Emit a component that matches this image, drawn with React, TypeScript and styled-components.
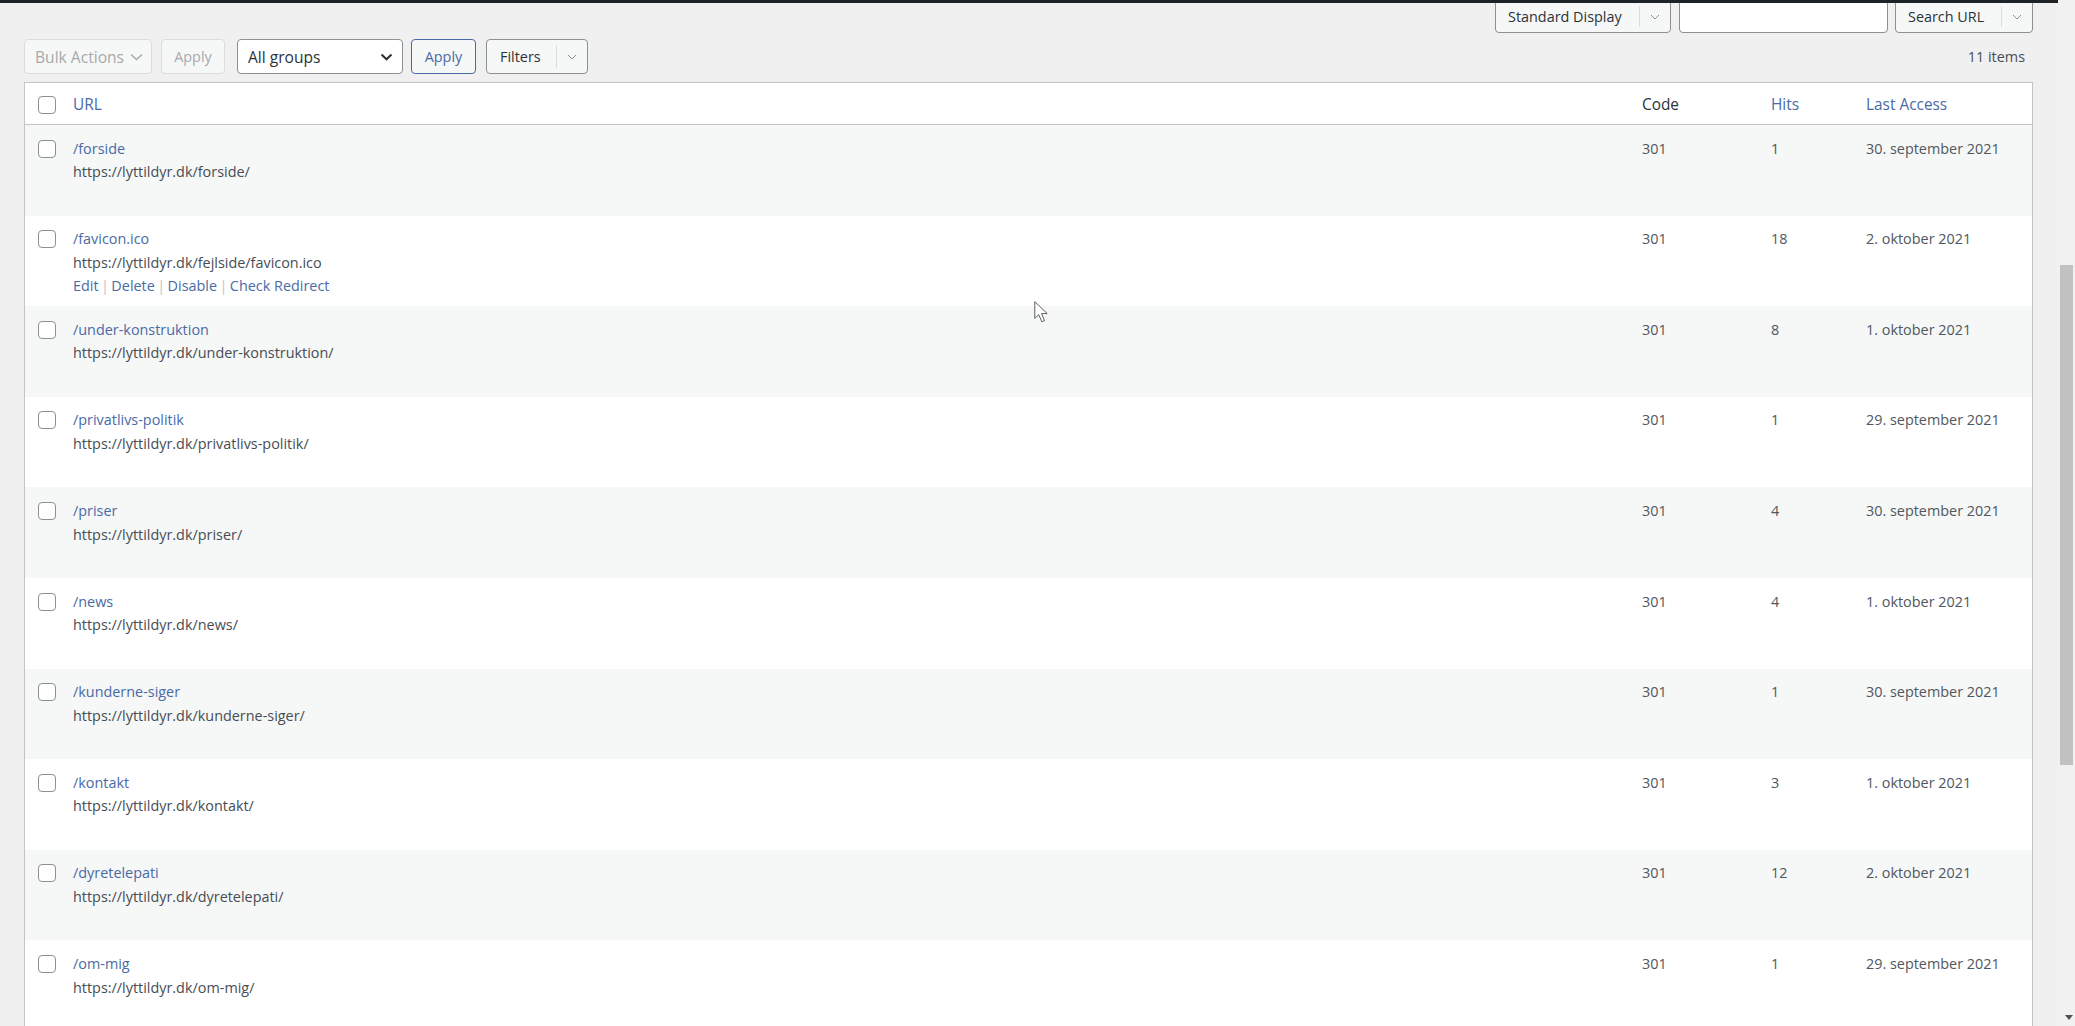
import * as React from 'react';
import styled, { createGlobalStyle } from 'styled-components';

interface Redirect {
  source: string;
  target: string;
  code: number;
  hits: number;
  lastAccess: string;
}

const redirects: Redirect[] = [
  { source: '/forside', target: 'https://lyttildyr.dk/forside/', code: 301, hits: 1, lastAccess: '30. september 2021' },
  { source: '/favicon.ico', target: 'https://lyttildyr.dk/fejlside/favicon.ico', code: 301, hits: 18, lastAccess: '2. oktober 2021' },
  { source: '/under-konstruktion', target: 'https://lyttildyr.dk/under-konstruktion/', code: 301, hits: 8, lastAccess: '1. oktober 2021' },
  { source: '/privatlivs-politik', target: 'https://lyttildyr.dk/privatlivs-politik/', code: 301, hits: 1, lastAccess: '29. september 2021' },
  { source: '/priser', target: 'https://lyttildyr.dk/priser/', code: 301, hits: 4, lastAccess: '30. september 2021' },
  { source: '/news', target: 'https://lyttildyr.dk/news/', code: 301, hits: 4, lastAccess: '1. oktober 2021' },
  { source: '/kunderne-siger', target: 'https://lyttildyr.dk/kunderne-siger/', code: 301, hits: 1, lastAccess: '30. september 2021' },
  { source: '/kontakt', target: 'https://lyttildyr.dk/kontakt/', code: 301, hits: 3, lastAccess: '1. oktober 2021' },
  { source: '/dyretelepati', target: 'https://lyttildyr.dk/dyretelepati/', code: 301, hits: 12, lastAccess: '2. oktober 2021' },
  { source: '/om-mig', target: 'https://lyttildyr.dk/om-mig/', code: 301, hits: 1, lastAccess: '29. september 2021' },
];

// row the mouse is resting on, so its actions are shown
const hoveredRow = 1;

const link = '#4a6aa6';
const text = '#474d54';

const GlobalStyle = createGlobalStyle`
  html, body {
    margin: 0;
    padding: 0;
    overflow: hidden;
  }
  body {
    font-family: "Open Sans", "Noto Sans", sans-serif;
    color: ${text};
  }
`;

const Screen = styled.div`
  display: flex;
  height: 100vh;
`;

const AdminBar = styled.div`
  position: fixed;
  top: 0;
  left: 0;
  right: 17px;
  height: 3px;
  background: #1d2327;
  z-index: 10;
`;

const Page = styled.main`
  flex: 1;
  min-width: 0;
  background: #f0f0f1;
  padding: 0 25px 0 24px;
  overflow: hidden;
`;

const SearchRow = styled.div`
  display: flex;
  justify-content: flex-end;
  height: 33px;
`;

const NavRow = styled.div`
  display: flex;
  align-items: center;
  height: 35px;
  margin-top: 6px;
`;

const Box = styled.div<{ $w: number; $space?: number }>`
  display: flex;
  align-items: center;
  box-sizing: border-box;
  width: ${p => p.$w}px;
  height: 100%;
  margin-right: ${p => p.$space || 0}px;
  border: 1px solid #8c8f94;
  border-radius: 4px;
  background: #f6f7f7;
  color: #2c3338;
  font-size: 14.4px;
  white-space: nowrap;
`;

const DisabledBox = styled(Box)`
  border-color: #dcdcde;
  color: #a7aaad;
`;

const BulkBox = styled(DisabledBox)`
  font-size: 15.6px;
`;

const SelectBox = styled(Box)`
  background: #fff;
  font-size: 15.6px;
  justify-content: space-between;
  padding: 0 9px 0 10px;
`;

const PrimaryBox = styled(Box)`
  border-color: ${link};
  color: ${link};
  justify-content: center;
`;

const InputBox = styled(Box)`
  background: #fff;
`;

const Label = styled.span<{ $pad?: number }>`
  flex: 1;
  padding-left: ${p => p.$pad ?? 12}px;
`;

const CenterLabel = styled.span`
  flex: 1;
  text-align: center;
`;

const Caret = styled.span`
  position: relative;
  display: flex;
  align-items: center;
  justify-content: center;
  width: 31px;
  height: 100%;
  &::before {
    content: '';
    position: absolute;
    left: 0;
    top: 5px;
    bottom: 5px;
    border-left: 1px solid #dcdcde;
  }
`;

const Count = styled.span`
  margin-left: auto;
  margin-right: 8px;
  font-size: 14.4px;
  color: ${text};
`;

const Table = styled.div`
  margin-top: 8px;
  background: #fff;
  border: 1px solid #c3c4c7;
`;

const HeadRow = styled.div`
  display: flex;
  height: 41px;
  border-bottom: 1px solid #c3c4c7;
  box-sizing: content-box;
`;

const Row = styled.div<{ $alt: boolean }>`
  display: flex;
  height: 90.6px;
  box-sizing: border-box;
  background: ${p => (p.$alt ? '#f6f7f7' : '#fff')};
`;

const Cell = styled.div<{ $w?: number; $head?: boolean }>`
  box-sizing: border-box;
  ${p => (p.$w ? `width: ${p.$w}px;` : 'flex: 1; min-width: 0;')}
  padding-top: ${p => (p.$head ? 10 : 11.7)}px;
  font-size: ${p => (p.$head ? 15.4 : 14.4)}px;
  line-height: 23.5px;
  color: ${p => (p.$head ? '#2c3338' : '#50575e')};
`;

const CheckCell = styled(Cell)`
  padding-left: 13px;
`;

const Check = styled.span`
  display: block;
  width: 18px;
  height: 18px;
  margin-top: 3px;
  box-sizing: border-box;
  border: 1px solid #8c8f94;
  border-radius: 4px;
  background: #fff;
`;

const SortLink = styled.span`
  color: ${link};
`;

const Source = styled.div`
  color: ${link};
`;

const Target = styled.div`
  color: ${text};
`;

const Actions = styled.div<{ $visible: boolean }>`
  visibility: ${p => (p.$visible ? 'visible' : 'hidden')};
  color: ${link};
`;

const Sep = styled.span`
  color: #c3c4c7;
  margin: 0 -1.3px;
`;

const ScrollTrack = styled.div`
  width: 17px;
  background: #f1f1f1;
  display: flex;
  flex-direction: column;
  align-items: center;
`;

const Thumb = styled.div`
  width: 13px;
  height: 500px;
  margin-top: 265px;
  background: #c1c1c1;
`;

const ScrollArrow = styled.svg`
  margin-top: auto;
  margin-bottom: 6px;
  margin-left: 4px;
`;

const Cursor = styled.svg`
  position: fixed;
  left: 1034px;
  top: 301px;
  z-index: 20;
`;

const Chevron: React.FC<{ color: string; bold?: boolean }> = ({ color, bold }) =>
  bold ? (
    <svg width="13" height="8" viewBox="0 0 13 8">
      <polyline points="1.5,1.5 6.5,6.2 11.5,1.5" fill="none" stroke={color} strokeWidth="2.1" />
    </svg>
  ) : (
    <svg width="10" height="6" viewBox="0 0 10 6">
      <polyline points="1,1 5,5 9,1" fill="none" stroke={color} strokeWidth="1" />
    </svg>
  );

const RowActions: React.FC<{ visible: boolean }> = ({ visible }) => (
  <Actions $visible={visible}>
    Edit <Sep>|</Sep> Delete <Sep>|</Sep> Disable <Sep>|</Sep> Check Redirect
  </Actions>
);

export default function App() {
  return (
    <Screen>
      <GlobalStyle />
      <AdminBar />
      <Page>
        <SearchRow>
          <Box $w={176} $space={8}>
            <Label>Standard Display</Label>
            <Caret><Chevron color="#8c8f94" /></Caret>
          </Box>
          <InputBox $w={209} $space={7} />
          <Box $w={138}>
            <Label>Search URL</Label>
            <Caret><Chevron color="#8c8f94" /></Caret>
          </Box>
        </SearchRow>

        <NavRow>
          <BulkBox $w={128} $space={9}>
            <Label $pad={10}>Bulk Actions</Label>
            <svg width="13" height="8" viewBox="0 0 13 8" style={{ marginRight: 8 }}>
              <polyline points="1,1.5 6.5,6.5 12,1.5" fill="none" stroke="#a7aaad" strokeWidth="1.6" />
            </svg>
          </BulkBox>
          <DisabledBox $w={64} $space={12}>
            <CenterLabel>Apply</CenterLabel>
          </DisabledBox>
          <SelectBox $w={166} $space={8}>
            <span>All groups</span>
            <Chevron color="#2c3338" bold />
          </SelectBox>
          <PrimaryBox $w={65} $space={10}>Apply</PrimaryBox>
          <Box $w={102}>
            <Label $pad={13}>Filters</Label>
            <Caret><Chevron color="#8c8f94" /></Caret>
          </Box>
          <Count>11 items</Count>
        </NavRow>

        <Table>
          <HeadRow>
            <CheckCell $w={48} $head><Check /></CheckCell>
            <Cell $head><SortLink>URL</SortLink></Cell>
            <Cell $w={129} $head>Code</Cell>
            <Cell $w={95} $head><SortLink>Hits</SortLink></Cell>
            <Cell $w={166} $head><SortLink>Last Access</SortLink></Cell>
          </HeadRow>
          {redirects.map((r, i) => (
            <Row key={r.source} $alt={i % 2 === 0}>
              <CheckCell $w={48}><Check /></CheckCell>
              <Cell>
                <Source>{r.source}</Source>
                <Target>{r.target}</Target>
                <RowActions visible={i === hoveredRow} />
              </Cell>
              <Cell $w={129}>{r.code}</Cell>
              <Cell $w={95}>{r.hits}</Cell>
              <Cell $w={166}>{r.lastAccess}</Cell>
            </Row>
          ))}
        </Table>
      </Page>
      <ScrollTrack>
        <Thumb />
        <ScrollArrow width="8" height="5" viewBox="0 0 8 5">
          <polygon points="0,0 8,0 4,5" fill="#505050" />
        </ScrollArrow>
      </ScrollTrack>
      <Cursor width="15" height="22" viewBox="0 0 14 21">
        <path d="M0.6 0.6 V16.6 L4.4 13 L7.3 19.8 L9.9 18.8 L7 12 H12.4 Z" fill="#fff" stroke="#555" strokeWidth="0.9" strokeLinejoin="round" />
      </Cursor>
    </Screen>
  );
}
